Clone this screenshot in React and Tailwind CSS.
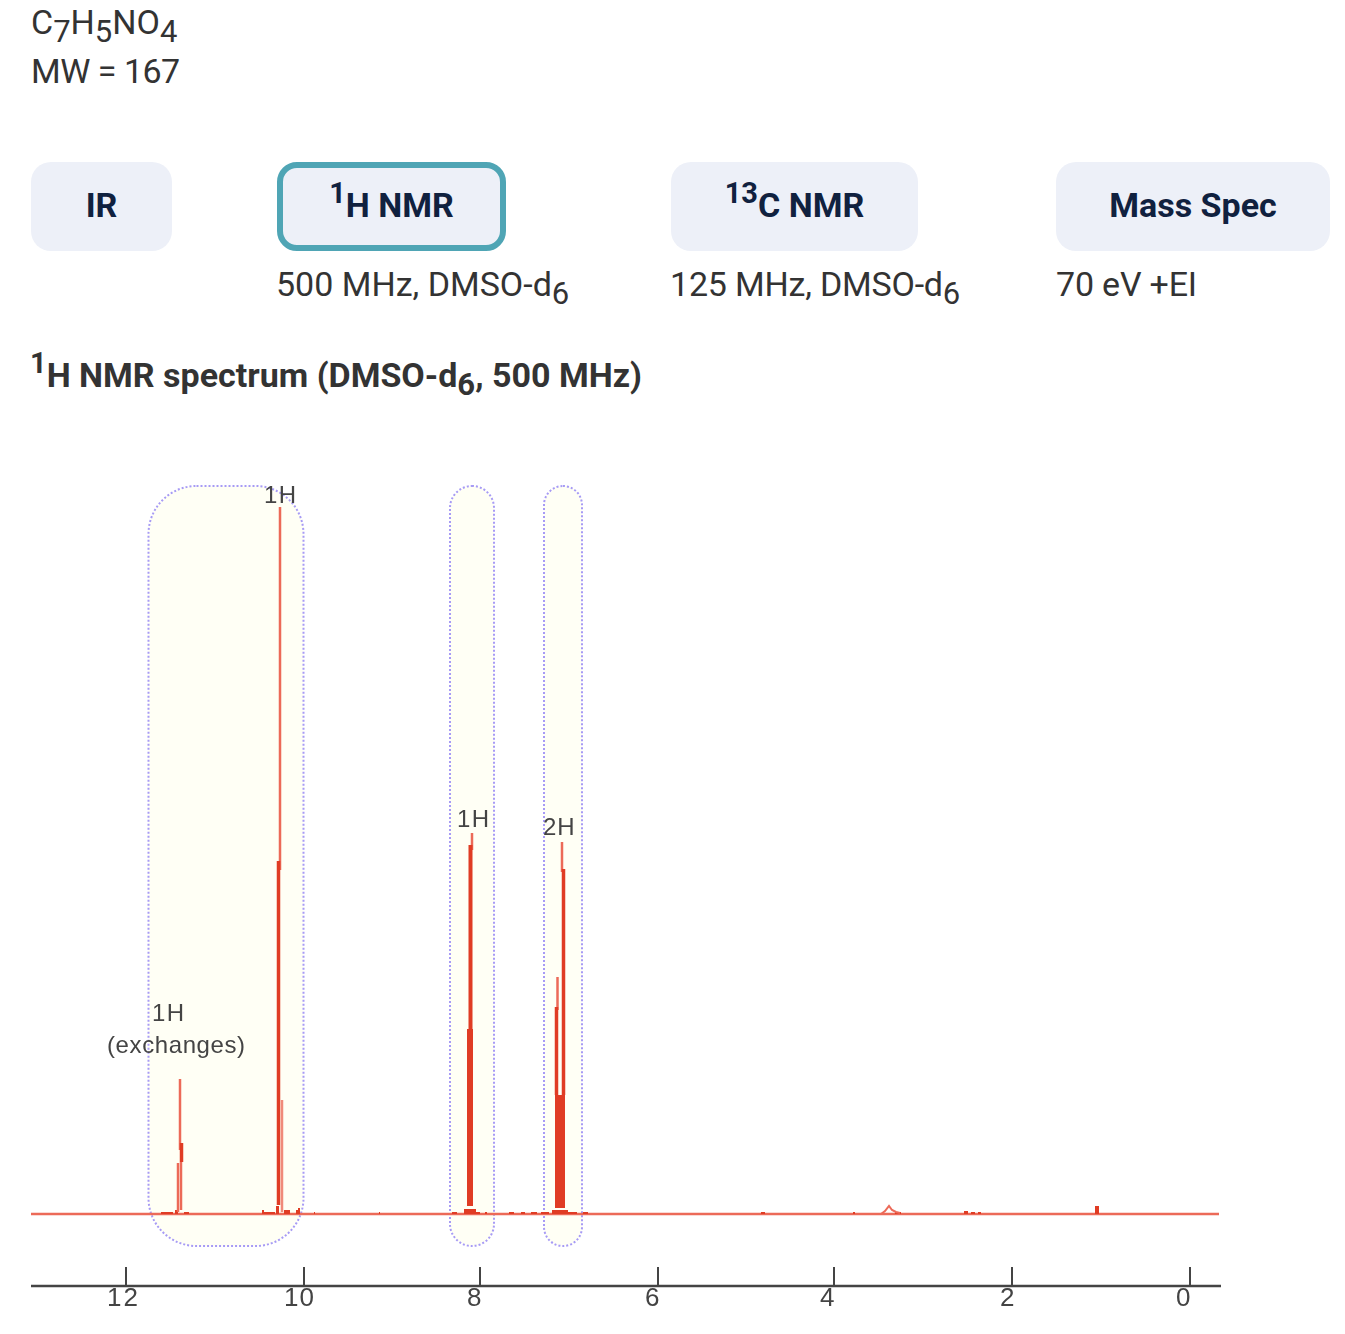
import React from "react";

const RED = "#e03c24";
const LIGHT = "#ec6a58";

// x, top, bottom, width, colour
const peaks = [
  [180, 1079, 1150, 2.5, LIGHT],
  [181.5, 1143, 1162, 3.5, RED],
  [181, 1162, 1210, 2.5, LIGHT],
  [178, 1163, 1212, 2.5, LIGHT],
  [280, 507, 870, 2.5, LIGHT],
  [278.5, 861, 1205, 3.5, RED],
  [282, 1100, 1212, 2.5, "#f08a7a"],
  [472, 833, 850, 2.5, LIGHT],
  [470.5, 845, 1029, 4, RED],
  [470, 1029, 1206, 6, RED],
  [562, 842, 872, 2.5, LIGHT],
  [563.5, 869, 1095, 3.5, RED],
  [557.5, 977, 1010, 2.5, LIGHT],
  [556.5, 1007, 1095, 3.5, RED],
  [560, 1095, 1208, 10, RED],
];

// little bumps sitting on the baseline
const bumps = [
  [161, 173, 2], [175, 178, 4], [184, 189, 2],
  [262, 264, 4], [264, 275, 2], [276, 279, 8], [284, 290, 4], [296, 298, 4], [298, 300, 6], [314, 315, 2],
  [379, 380, 2], [452, 457, 2], [464, 476, 5], [476, 480, 2], [485, 487, 2],
  [509, 514, 2], [521, 525, 2], [531, 537, 2], [541, 549, 2], [552, 568, 4], [568, 577, 2], [583, 588, 2],
  [761, 765, 2], [853, 855, 2], [895, 901, 2],
  [964, 968, 3], [971, 975, 2], [978, 981, 2], [1095, 1099, 8],
];

const ticks = [
  [126, "12", 107, 2],
  [304, "10", 284, 1],
  [480, "8", 467, 0],
  [658, "6", 645, 0],
  [834, "4", 820, 0],
  [1012, "2", 1000, 0],
  [1190, "0", 1176, 0],
];

const labelClass = "fill-[#444444] font-['Liberation_Sans',sans-serif]";

const Spectrum = () => (
  <svg viewBox="0 470 1345 864" className="mt-[75px] block h-[864px] w-[1345px] blur-[0.4px]">
    <rect x="148.5" y="486" width="155" height="760" rx="48" fill="#fffff5" stroke="#a79bf5" strokeWidth="2" strokeDasharray="2 2" />
    <rect x="450" y="486" width="44" height="760" rx="22" fill="#fffff5" stroke="#a79bf5" strokeWidth="2" strokeDasharray="2 2" />
    <rect x="544" y="486" width="38" height="760" rx="19" fill="#fffff5" stroke="#a79bf5" strokeWidth="2" strokeDasharray="2 2" />

    <line x1="31" y1="1214" x2="1219" y2="1214" stroke={LIGHT} strokeWidth="2.5" />
    {bumps.map(([x1, x2, h], i) => (
      <rect key={i} x={x1} y={1214 - h} width={x2 - x1} height={h} fill={RED} />
    ))}
    <path d="M881 1214 L885 1211 L889 1206 L892 1210 L896 1212 L900 1213" fill="none" stroke={LIGHT} strokeWidth="2" />
    {peaks.map(([x, y1, y2, w, color], i) => (
      <line key={i} x1={x} y1={y1} x2={x} y2={y2} stroke={color} strokeWidth={w} />
    ))}

    <line x1="31" y1="1286" x2="1221" y2="1286" stroke="#444444" strokeWidth="2.5" />
    {ticks.map(([x, label, lx, spacing]) => (
      <g key={label}>
        <line x1={x} y1="1267" x2={x} y2="1286" stroke="#444444" strokeWidth="2" />
        <text x={lx} y="1306" fontSize="26" letterSpacing={spacing} className={labelClass}>
          {label}
        </text>
      </g>
    ))}

    <text x="264" y="503" fontSize="24" letterSpacing="1.5" className={labelClass}>1H</text>
    <text x="457" y="827" fontSize="24" letterSpacing="1.5" className={labelClass}>1H</text>
    <text x="543" y="835" fontSize="24" letterSpacing="1" className={labelClass}>2H</text>
    <text x="152" y="1021" fontSize="24" letterSpacing="1.5" className={labelClass}>1H</text>
    <text x="107" y="1053" fontSize="24" letterSpacing="0.6" className={labelClass}>(exchanges)</text>
  </svg>
);

const Tab = ({ active, className, children }) => (
  <div
    className={`flex h-[89px] items-center justify-center rounded-[20px] bg-[#edf0f8] pb-[2px] text-[34px] font-bold text-[#10213f] ${
      active ? "border-[6px] border-[#4fa5b5]" : ""
    } ${className}`}
  >
    <span>{children}</span>
  </div>
);

const Sup = ({ children }) => <sup className="text-[29px]">{children}</sup>;
const Sub = ({ children }) => <sub className="text-[31px]">{children}</sub>;

export default function App() {
  return (
    <div className="h-[1334px] w-[1345px] overflow-hidden bg-white font-['Roboto',sans-serif] text-[34px] text-[#333333]">
      <div className="pl-[31px]">
        <div className="leading-[48px]">
          <div className="-mt-[2px] mb-[1px]">
            C<Sub>7</Sub>H<Sub>5</Sub>NO<Sub>4</Sub>
          </div>
          <div className="tracking-[-0.5px]">MW = 167</div>
        </div>

        <div className="mt-[67px] flex gap-24">
          <div className="w-[150px] shrink-0">
            <Tab className="w-[141px]">IR</Tab>
          </div>
          <div className="w-[298px] shrink-0">
            <Tab active className="w-[229px]">
              <Sup>1</Sup>H NMR
            </Tab>
            <div className="-ml-[1px] mt-[13px] whitespace-nowrap leading-[40px]">
              500 MHz, DMSO-d<Sub>6</Sub>
            </div>
          </div>
          <div className="w-[289px] shrink-0">
            <Tab className="w-[247px]">
              <Sup>13</Sup>C NMR
            </Tab>
            <div className="-ml-[1px] mt-[13px] whitespace-nowrap leading-[40px] tracking-[-0.2px]">
              125 MHz, DMSO-d<Sub>6</Sub>
            </div>
          </div>
          <div className="w-[274px] shrink-0">
            <Tab className="w-[274px]">Mass Spec</Tab>
            <div className="mt-[13px] whitespace-nowrap leading-[40px] tracking-[-0.2px]">70 eV +EI</div>
          </div>
        </div>

        <h2 className="-ml-[1px] mt-[51px] whitespace-nowrap text-[34px] font-bold leading-[40px]">
          <Sup>1</Sup>H NMR spectrum (DMSO-d<Sub>6</Sub>, 500 MHz)
        </h2>
      </div>

      <Spectrum />
    </div>
  );
}
